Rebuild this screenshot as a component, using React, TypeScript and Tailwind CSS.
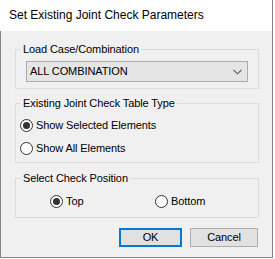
import React from "react";

function Radio({ checked, label }: { checked?: boolean; label: string }) {
  return (
    <div className="flex items-center h-[17px]">
      <span className="w-[13px] h-[13px] rounded-full border border-[#333333] bg-white flex items-center justify-center shrink-0">
        {checked && <span className="w-[7px] h-[7px] rounded-full bg-[#333333]" />}
      </span>
      <span className="ml-[3px]">{label}</span>
    </div>
  );
}

export default function App() {
  return (
    <div
      className="w-[275px] h-[259px] bg-white text-black text-[11px] tracking-[-0.1px]"
      style={{ fontFamily: '"Liberation Sans", Arial, sans-serif' }}
    >
      <div className="w-[273px] h-[258px] flex flex-col border-r border-[#858585]">
        <div className="h-[31px] bg-white flex items-center pl-[9px] text-[12px] leading-[15px] tracking-[0px]">
          Set Existing Joint Check Parameters
        </div>
        <div className="flex-1 bg-[#f0f0f0] border-l border-b border-[#858585] pl-[14px] pt-[11px]">
          <div className="w-[244px] flex flex-col">
            <fieldset className="border border-[#dcdcdc] px-0 pb-[6px]">
              <legend className="ml-[5px] px-[2px] leading-[15px]">Load Case/Combination</legend>
              <div className="mt-[4px] mx-[10px] h-[21px] bg-[#e5e5e5] border border-[#acacac] flex items-center justify-between pl-[3px] pr-[5px]">
                <span>ALL COMBINATION</span>
                <svg width="9" height="6" viewBox="0 0 9 6" className="mt-[1px]">
                  <path d="M0.5 0.8 L4.5 4.8 L8.5 0.8" fill="none" stroke="#555" strokeWidth="1.1" />
                </svg>
              </div>
            </fieldset>

            <fieldset className="mt-[7px] border border-[#dcdcdc] px-0 pb-[5px]">
              <legend className="ml-[5px] px-[2px] leading-[15px]">Existing Joint Check Table Type</legend>
              <div className="mt-[6px] pl-[4px] flex flex-col gap-[6px]">
                <Radio checked label="Show Selected Elements" />
                <Radio label="Show All Elements" />
              </div>
            </fieldset>

            <fieldset className="mt-[8px] border border-[#dcdcdc] px-0 pb-[7px]">
              <legend className="ml-[5px] px-[2px] leading-[15px]">Select Check Position</legend>
              <div className="mt-[7px] pl-[34px] flex">
                <div className="w-[105px]">
                  <Radio checked label="Top" />
                </div>
                <Radio label="Bottom" />
              </div>
            </fieldset>

            <div className="mt-[10px] flex justify-end gap-[8px] pr-[1px]">
              <button className="w-[63px] h-[19px] bg-[#e1e1e1] border-2 border-[#0078d7] flex items-center justify-center">
                OK
              </button>
              <button className="w-[68px] h-[19px] bg-[#e1e1e1] border border-[#adadad] flex items-center justify-center">
                Cancel
              </button>
            </div>
          </div>
        </div>
      </div>
    </div>
  );
}
